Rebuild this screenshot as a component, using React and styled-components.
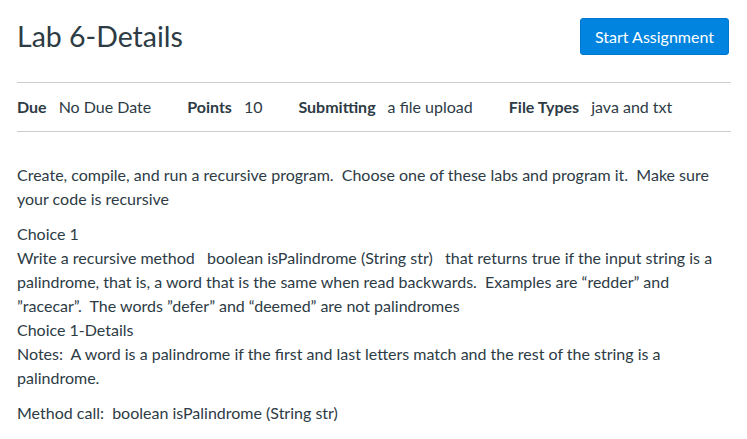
import React from 'react'
import styled, { createGlobalStyle } from 'styled-components'

const GlobalStyle = createGlobalStyle`
	body {
		margin: 0;
		background: #fff;
		font-family: Lato, 'Helvetica Neue', Helvetica, Arial, sans-serif;
		color: #2d3b45;
	}
`

const Page = styled.div`
	padding: 16px 16px 0 17px;
	width: 714px;
`

const Header = styled.div`
	display: flex;
	justify-content: space-between;
	align-items: flex-start;
	padding-bottom: 26px;
	border-bottom: 1px solid #c7cdd1;
`

const Title = styled.h1`
	margin: 0;
	font-size: 28.5px;
	font-weight: 400;
	line-height: 40px;
	color: #2d3b45;
`

const StartButton = styled.button`
	margin: 2px 2px 0 0;
	height: 37px;
	padding: 0 14px;
	border: 1px solid #0077cc;
	border-radius: 3px;
	background: #0084e0;
	color: #fff;
	font-family: inherit;
	font-size: 16px;
`

const DetailsRow = styled.div`
	display: flex;
	align-items: baseline;
	height: 48px;
	line-height: 48px;
	border-bottom: 1px solid #c7cdd1;
	font-size: 16px;
`

const Detail = styled.div`
	margin-right: ${p => p.gap}px;
	white-space: nowrap;
`

const Label = styled.span`
	font-weight: 700;
	margin-right: 12px;
`

const Content = styled.div`
	padding-top: 31px;
	font-size: 16px;
	line-height: 24px;
`

const Para = styled.p`
	margin: 0 0 11px;
`

const details = [
	{ label: 'Due', value: 'No Due Date', gap: 36 },
	{ label: 'Points', value: '10', gap: 36 },
	{ label: 'Submitting', value: 'a file upload', gap: 36 },
	{ label: 'File Types', value: 'java and txt', gap: 0 },
]

const App = () => (
	<Page>
		<GlobalStyle />
		<Header>
			<Title>Lab 6-Details</Title>
			<StartButton>Start Assignment</StartButton>
		</Header>
		<DetailsRow>
			{details.map(d => (
				<Detail key={d.label} gap={d.gap}>
					<Label>{d.label}</Label>
					{d.value}
				</Detail>
			))}
		</DetailsRow>
		<Content>
			<Para>
				Create, compile, and run a recursive program.&nbsp; Choose one of these labs and program it.&nbsp; Make sure your code is recursive
			</Para>
			<Para>
				Choice 1<br />
				Write a recursive method &nbsp; boolean isPalindrome (String str) &nbsp; that returns true if the input string is a palindrome, that is, a word that is the same when read backwards.&nbsp; Examples are “redder” and ”racecar”.&nbsp; The words ”defer” and “deemed” are not palindromes<br />
				Choice 1-Details<br />
				Notes:&nbsp; A word is a palindrome if the first and last letters match and the rest of the string is a palindrome.
			</Para>
			<Para>Method call:&nbsp; boolean isPalindrome (String str)</Para>
		</Content>
	</Page>
)

export default App
